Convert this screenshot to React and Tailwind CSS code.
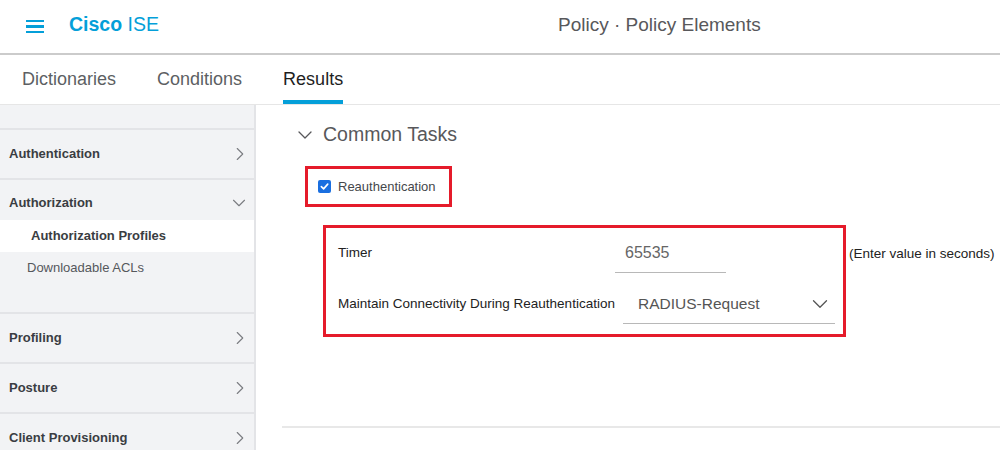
import { ChevronRight, ChevronDown } from 'lucide-react'

const sections = [
  { label: 'Authentication', open: false },
  { label: 'Authorization', open: true, children: ['Authorization Profiles', 'Downloadable ACLs'] },
  { label: 'Profiling', open: false },
  { label: 'Posture', open: false },
  { label: 'Client Provisioning', open: false },
]

function Sidebar() {
  return (
    <aside className="w-[256px] shrink-0 bg-[#f2f3f5] border-r-2 border-[#e3e4e7]">
      <div className="h-[23px]" />
      {sections.map((s) => (
        <div key={s.label} className="border-t-2 border-[#e3e4e7]">
          {s.open ? (
            <>
              <div className="h-[40px] pt-[6px] pl-[9px] pr-[4px] flex items-center justify-between">
                <span className="text-[13px] font-bold text-[#3a3d42]">{s.label}</span>
                <ChevronDown size={22} strokeWidth={1.2} className="text-[#7a7c80]" />
              </div>
              <div className="h-[32px] bg-white flex items-center pl-[31px]">
                <span className="text-[13px] font-bold text-[#3a3d42]">{s.children[0]}</span>
              </div>
              <div className="h-[32px] flex items-center pl-[27px]">
                <span className="text-[13px] text-[#55585c]">{s.children[1]}</span>
              </div>
              <div className="h-[28px]" />
            </>
          ) : (
            <div className="h-[48px] pl-[9px] pr-[3px] flex items-center justify-between">
              <span className="text-[13px] font-bold text-[#3a3d42]">{s.label}</span>
              <ChevronRight size={22} strokeWidth={1.2} className="text-[#7a7c80]" />
            </div>
          )}
        </div>
      ))}
    </aside>
  )
}

function Checkbox() {
  return (
    <div className="w-[13px] h-[13px] rounded-[2px] bg-[#1a6fe0] flex items-center justify-center">
      <svg width="9" height="9" viewBox="0 0 10 10" fill="none">
        <path d="M1.5 5.2 L4 7.6 L8.6 2.4" stroke="white" strokeWidth="1.8" strokeLinecap="round" strokeLinejoin="round" />
      </svg>
    </div>
  )
}

function CommonTasks() {
  return (
    <main className="flex-1 pl-[26px] pt-[17px]">
      <div className="pl-[17px]">
        <div className="flex items-center gap-[6px] h-[26px]">
          <ChevronDown size={24} strokeWidth={1.3} className="text-[#58585b] -ml-[6px]" />
          <span className="text-[19.5px] text-[#58585b]">Common Tasks</span>
        </div>

        <div className="mt-[18px] ml-[6px] w-[147px] h-[41px] border-[3px] border-[#e51b2a] flex items-center gap-[7px] pl-[10px]">
          <Checkbox />
          <span className="text-[13px] text-[#45474b]">Reauthentication</span>
        </div>

        <div className="mt-[18px] ml-[24px] flex items-start">
          <div className="w-[523px] h-[112px] border-[3px] border-[#e51b2a] pl-[12px] pt-[5px]">
            <div className="flex items-center">
              <span className="w-[277px] text-[13.5px] text-[#222]">Timer</span>
              <div className="w-[111px] h-[40px] border-b border-[#b8b8b8] flex items-center pl-[10px]">
                <span className="text-[16px] text-[#666]">65535</span>
              </div>
            </div>
            <div className="flex items-center mt-[11px]">
              <span className="w-[285px] text-[13.5px] text-[#222]">Maintain Connectivity During Reauthentication</span>
              <div className="w-[212px] h-[40px] border-b border-[#b8b8b8] flex items-center justify-between pl-[15px] pr-[2px]">
                <span className="text-[15.5px] text-[#555]">RADIUS-Request</span>
                <ChevronDown size={26} strokeWidth={1.2} className="text-[#555]" />
              </div>
            </div>
          </div>
          <span className="ml-[3px] mt-[19px] text-[13.5px] text-[#222]">(Enter value in seconds)</span>
        </div>
      </div>

      <div className="mt-[89px] border-t-2 border-[#e8e8e8]" />
    </main>
  )
}

export default function App() {
  return (
    <div className="w-[1000px] h-[450px] overflow-hidden bg-white flex flex-col" style={{ fontFamily: '"Liberation Sans", Arial, sans-serif' }}>
      <header className="h-[55px] shrink-0 flex items-center border-b-2 border-[#cbcbcb]">
        <div className="ml-[26px] w-[18px] flex flex-col gap-[3px]">
          <span className="h-[2.5px] bg-[#049fd9]" />
          <span className="h-[2.5px] bg-[#049fd9]" />
          <span className="h-[2.5px] bg-[#049fd9]" />
        </div>
        <div className="ml-[25px] text-[19.5px] text-[#049fd9] -mt-[3px]">
          <span className="font-bold">Cisco</span> ISE
        </div>
        <div className="ml-[399px] text-[19px] text-[#58585b] -mt-[3px]">Policy · Policy Elements</div>
      </header>

      <nav className="h-[50px] shrink-0 flex items-stretch gap-[41px] pl-[22px] border-b border-[#e6e6e6]">
        <div className="flex items-center pt-[4px] text-[18px] text-[#5d5f63] border-b-4 border-transparent">Dictionaries</div>
        <div className="flex items-center pt-[4px] text-[18px] text-[#5d5f63] border-b-4 border-transparent">Conditions</div>
        <div className="flex items-center pt-[4px] text-[18px] text-[#1e1e1e] border-b-4 border-[#049fd9]">Results</div>
      </nav>

      <div className="flex flex-1 min-h-0">
        <Sidebar />
        <CommonTasks />
      </div>
    </div>
  )
}
